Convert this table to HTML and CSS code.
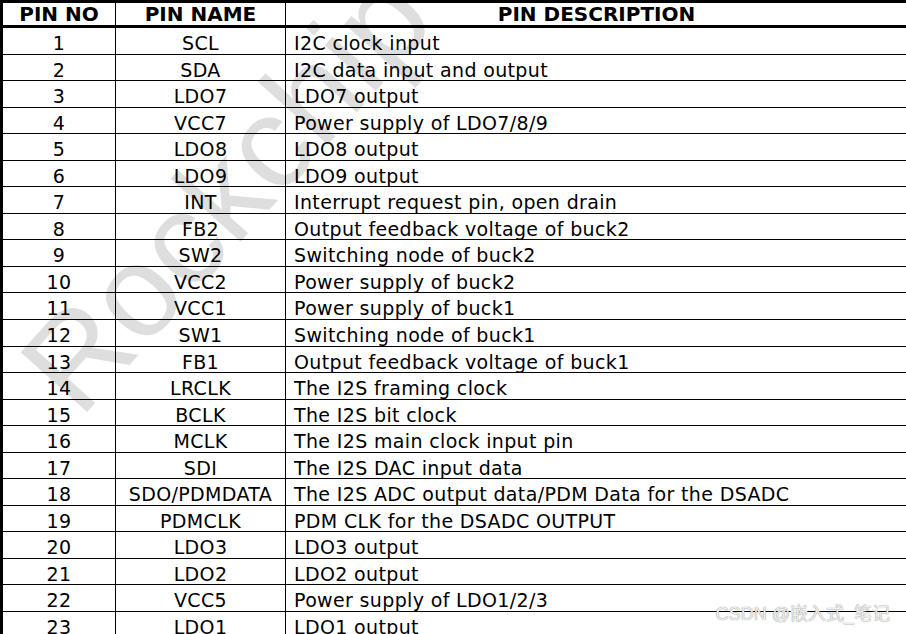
FILE: index.html
```html
<!DOCTYPE html>
<html>
<head>
<meta charset="utf-8">
<link rel="stylesheet" href="styles.css">
</head>
<body>
<div class="page">
  <table class="pins">
    <colgroup>
      <col class="c-no">
      <col class="c-name">
      <col class="c-desc">
    </colgroup>
    <thead>
      <tr><th>PIN NO</th><th>PIN NAME</th><th>PIN DESCRIPTION</th></tr>
    </thead>
    <tbody>
      <tr><td>1</td><td>SCL</td><td class="desc">I2C clock input</td></tr>
      <tr><td>2</td><td>SDA</td><td class="desc">I2C data input and output</td></tr>
      <tr><td>3</td><td>LDO7</td><td class="desc">LDO7 output</td></tr>
      <tr><td>4</td><td>VCC7</td><td class="desc">Power supply of LDO7/8/9</td></tr>
      <tr><td>5</td><td>LDO8</td><td class="desc">LDO8 output</td></tr>
      <tr><td>6</td><td>LDO9</td><td class="desc">LDO9 output</td></tr>
      <tr><td>7</td><td>INT</td><td class="desc">Interrupt request pin, open drain</td></tr>
      <tr><td>8</td><td>FB2</td><td class="desc">Output feedback voltage of buck2</td></tr>
      <tr><td>9</td><td>SW2</td><td class="desc">Switching node of buck2</td></tr>
      <tr><td>10</td><td>VCC2</td><td class="desc">Power supply of buck2</td></tr>
      <tr><td>11</td><td>VCC1</td><td class="desc">Power supply of buck1</td></tr>
      <tr><td>12</td><td>SW1</td><td class="desc">Switching node of buck1</td></tr>
      <tr><td>13</td><td>FB1</td><td class="desc">Output feedback voltage of buck1</td></tr>
      <tr><td>14</td><td>LRCLK</td><td class="desc">The I2S framing clock</td></tr>
      <tr><td>15</td><td>BCLK</td><td class="desc">The I2S bit clock</td></tr>
      <tr><td>16</td><td>MCLK</td><td class="desc">The I2S main clock input pin</td></tr>
      <tr><td>17</td><td>SDI</td><td class="desc">The I2S DAC input data</td></tr>
      <tr><td>18</td><td>SDO/PDMDATA</td><td class="desc">The I2S ADC output data/PDM Data for the DSADC</td></tr>
      <tr><td>19</td><td>PDMCLK</td><td class="desc">PDM CLK for the DSADC OUTPUT</td></tr>
      <tr><td>20</td><td>LDO3</td><td class="desc">LDO3 output</td></tr>
      <tr><td>21</td><td>LDO2</td><td class="desc">LDO2 output</td></tr>
      <tr><td>22</td><td>VCC5</td><td class="desc">Power supply of LDO1/2/3</td></tr>
      <tr><td>23</td><td>LDO1</td><td class="desc">LDO1 output</td></tr>
    </tbody>
  </table>
  <div class="wm-rock">Rockchip Confidential</div>
  <div class="wm-csdn">CSDN @嵌入式_笔记</div>
</div>
</body>
</html>
```
FILE: styles.css
```css
html, body {
  margin: 0;
  padding: 0;
  background: #fff;
  overflow: hidden;
}
.page {
  position: relative;
  width: 906px;
  height: 634px;
  overflow: hidden;
}
.pins {
  width: 908px;
  border-collapse: separate;
  border-spacing: 0;
  table-layout: fixed;
  border-top: 3px solid #000;
  border-left: 3px solid #000;
  font-family: "DejaVu Sans", Verdana, sans-serif;
  color: #000;
}
.c-no { width: 113px; }
.c-name { width: 170px; }
.pins th {
  height: 22px;
  padding: 1px 0 0;
  box-sizing: border-box;
  font-size: 20px;
  font-weight: bold;
  line-height: 21px;
  text-align: center;
  vertical-align: top;
  border-right: 1px solid #000;
  border-bottom: 3px solid #000;
  white-space: nowrap;
}
.pins td {
  height: 26.55px;
  box-sizing: border-box;
  padding: 5px 0 0;
  font-size: 19px;
  line-height: 20px;
  letter-spacing: 0.35px;
  text-align: center;
  vertical-align: top;
  border-right: 1px solid #000;
  border-bottom: 1px solid #000;
  white-space: nowrap;
}
.pins td.desc {
  text-align: left;
  padding-left: 8px;
}
.wm-rock {
  position: absolute;
  left: 80px;
  top: 310px;
  font-family: "Liberation Sans", Arial, sans-serif;
  font-size: 130px;
  line-height: 130px;
  color: rgba(0, 0, 0, 0.13);
  white-space: nowrap;
  transform-origin: 0 110px;
  transform: rotate(-48deg);
  pointer-events: none;
}
.wm-csdn {
  position: absolute;
  right: 16px;
  bottom: 9px;
  font-family: "Liberation Sans", "Noto Sans CJK SC", sans-serif;
  font-size: 18px;
  color: #eeeeee;
  text-shadow: 0 0 1px #666;
  white-space: nowrap;
}
```
